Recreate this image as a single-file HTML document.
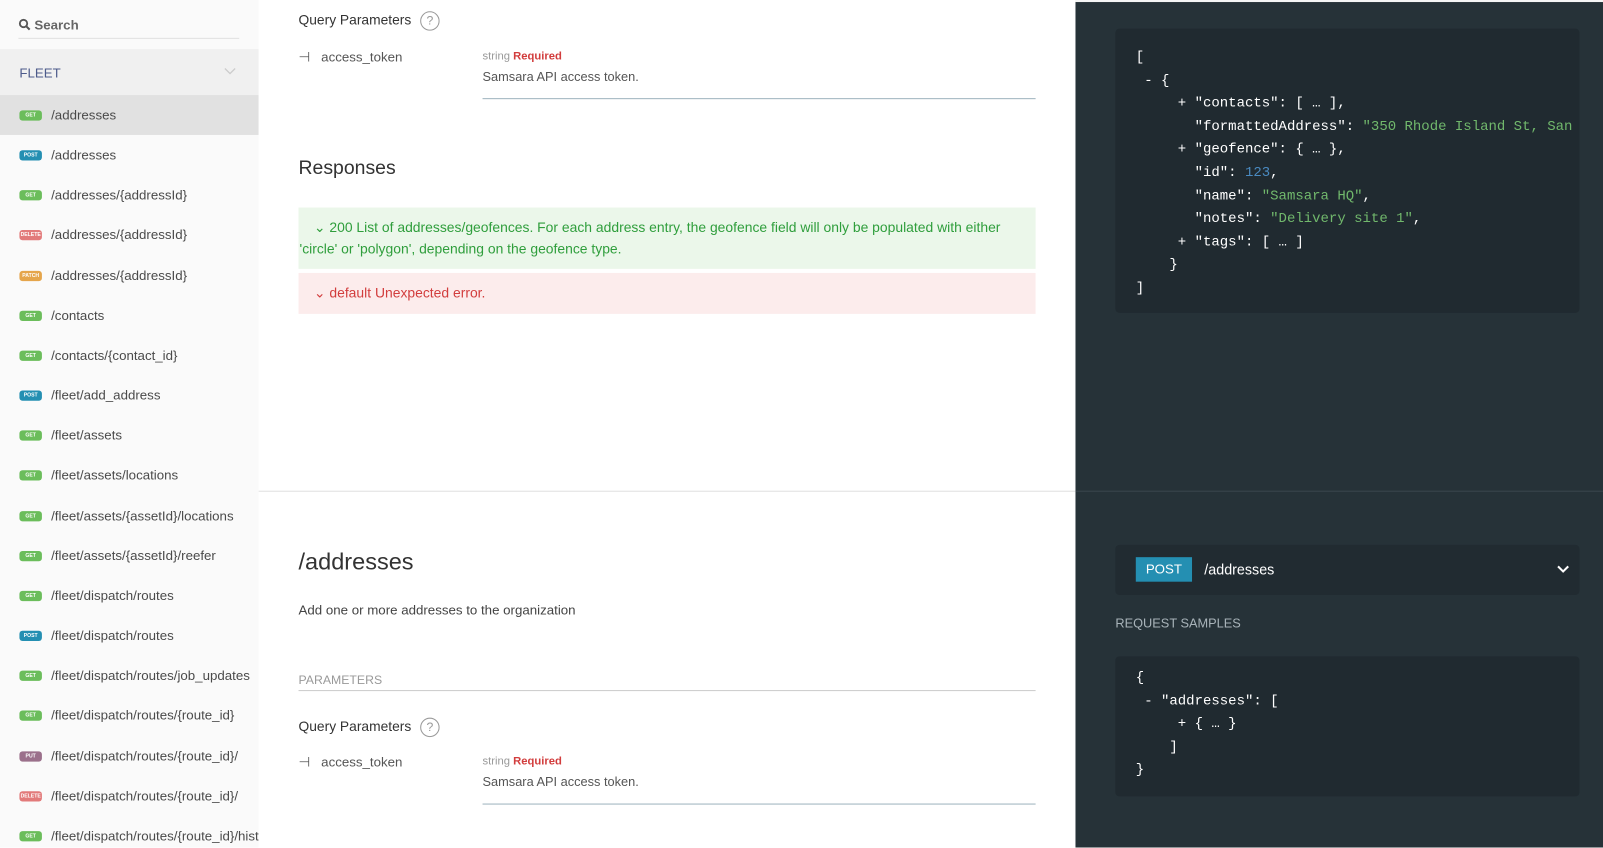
<!DOCTYPE html>
<html><head><meta charset="utf-8"><style>
*{margin:0;padding:0;box-sizing:border-box}
body{width:1603px;height:847px;overflow:hidden;position:relative;font-family:"Liberation Sans",sans-serif;background:#fff;color:#333}
#w{position:absolute;left:0;top:0;width:1568px;height:829px;transform:scale(1.02232);transform-origin:0 0}
.a{position:absolute;white-space:nowrap}
#side{position:absolute;left:0;top:0;width:253px;height:829px;background:#fafafa;overflow:hidden}
.item{position:absolute;left:0;width:253px;height:39px;font-size:13px;color:#4a4a4a}
.item .b{position:absolute;left:19px;top:15px;width:22px;height:10px;border-radius:3px;color:#fff;font-size:5px;font-weight:bold;text-align:center;line-height:10px;overflow:hidden}
.item .t{position:absolute;left:50px;top:12px;white-space:nowrap}
.get{background:#6bbd5b}.post{background:#248fb2}.del{background:#e27a7a}.patch{background:#e5a54b}.put{background:#9b708b}
#right{position:absolute;left:1052px;top:0;width:516px;height:829px;background:#263238}
.code{position:absolute;background:#202a30;border-radius:4px;font-family:"Liberation Mono",monospace;font-size:13.7px;color:#fff;line-height:22.6px;white-space:pre;overflow:hidden}
.s{color:#71b86c}.n{color:#4a8ac0}
</style></head><body><div id="w">
<div id="side">
  <div class="a" style="left:18px;top:17px;font-size:13px;font-weight:bold;color:#666"><svg width="12" height="12" viewBox="0 0 12 12" style="vertical-align:-1px"><circle cx="5" cy="5" r="3.6" fill="none" stroke="#555" stroke-width="1.8"/><path d="M7.6 7.6L11 11" stroke="#555" stroke-width="2"/></svg> Search</div>
  <div class="a" style="left:18px;top:37px;width:216px;height:1px;background:#e0e0e0"></div>
  <div class="a" style="left:0;top:48px;width:253px;height:45px;background:#f0f0f0"></div>
  <div class="a" style="left:19px;top:64px;font-size:13px;color:#4c5a8a">FLEET</div>
  <svg class="a" style="left:219px;top:66px" width="12" height="8" viewBox="0 0 12 8"><path d="M1 1l5 5 5-5" fill="none" stroke="#ccc" stroke-width="1.3"/></svg>
  <div class="a" style="left:0;top:93px;width:253px;height:39px;background:#e1e1e1"></div>
  <div class="item" style="top:93px"><span class="b get">GET</span><span class="t">/addresses</span></div>
  <div class="item" style="top:132px"><span class="b post">POST</span><span class="t">/addresses</span></div>
  <div class="item" style="top:171px"><span class="b get">GET</span><span class="t">/addresses/{addressId}</span></div>
  <div class="item" style="top:210px"><span class="b del">DELETE</span><span class="t">/addresses/{addressId}</span></div>
  <div class="item" style="top:250px"><span class="b patch">PATCH</span><span class="t">/addresses/{addressId}</span></div>
  <div class="item" style="top:289px"><span class="b get">GET</span><span class="t">/contacts</span></div>
  <div class="item" style="top:328px"><span class="b get">GET</span><span class="t">/contacts/{contact_id}</span></div>
  <div class="item" style="top:367px"><span class="b post">POST</span><span class="t">/fleet/add_address</span></div>
  <div class="item" style="top:406px"><span class="b get">GET</span><span class="t">/fleet/assets</span></div>
  <div class="item" style="top:445px"><span class="b get">GET</span><span class="t">/fleet/assets/locations</span></div>
  <div class="item" style="top:485px"><span class="b get">GET</span><span class="t">/fleet/assets/{assetId}/locations</span></div>
  <div class="item" style="top:524px"><span class="b get">GET</span><span class="t">/fleet/assets/{assetId}/reefer</span></div>
  <div class="item" style="top:563px"><span class="b get">GET</span><span class="t">/fleet/dispatch/routes</span></div>
  <div class="item" style="top:602px"><span class="b post">POST</span><span class="t">/fleet/dispatch/routes</span></div>
  <div class="item" style="top:641px"><span class="b get">GET</span><span class="t">/fleet/dispatch/routes/job_updates</span></div>
  <div class="item" style="top:680px"><span class="b get">GET</span><span class="t">/fleet/dispatch/routes/{route_id}</span></div>
  <div class="item" style="top:720px"><span class="b put">PUT</span><span class="t">/fleet/dispatch/routes/{route_id}/</span></div>
  <div class="item" style="top:759px"><span class="b del">DELETE</span><span class="t">/fleet/dispatch/routes/{route_id}/</span></div>
  <div class="item" style="top:798px"><span class="b get">GET</span><span class="t">/fleet/dispatch/routes/{route_id}/history</span></div>
</div>

<div class="a" style="left:292px;top:12px;font-size:13.5px">Query Parameters</div>
<div class="a" style="left:411px;top:11px;width:19px;height:19px;border:1px solid #999;border-radius:50%;font-size:12px;color:#999;text-align:center;line-height:17px">?</div>
<div class="a" style="left:292px;top:48px;font-size:13px;color:#555">⊣&nbsp;&nbsp;&nbsp;access_token</div>
<div class="a" style="left:472px;top:49px;font-size:11px;color:#999">string <b style="color:#d23d3d">Required</b></div>
<div class="a" style="left:472px;top:68px;font-size:12.5px;color:#555">Samsara API access token.</div>
<div class="a" style="left:472px;top:96px;width:541px;height:1px;background:#9fb4be"></div>

<div class="a" style="left:292px;top:154px;font-size:19px;color:#333">Responses</div>
<div class="a" style="left:292px;top:203px;width:721px;height:60px;background:#ebf7ea"></div>
<div class="a" style="left:307px;top:212px;font-size:13.6px;color:#2f9e3c;line-height:21px">⌄ 200 List of addresses/geofences. For each address entry, the geofence field will only be populated with either<br><span style="margin-left:-14px">'circle' or 'polygon', depending on the geofence type.</span></div>
<div class="a" style="left:292px;top:267px;width:721px;height:40px;background:#fcecec"></div>
<div class="a" style="left:307px;top:279px;font-size:13.6px;color:#d23d3d">⌄ default Unexpected error.</div>

<div class="a" style="left:253px;top:480px;width:799px;height:1px;background:#e0e0e0"></div>
<div class="a" style="left:292px;top:536px;font-size:23px;color:#333">/addresses</div>
<div class="a" style="left:292px;top:589px;font-size:13px;color:#444">Add one or more addresses to the organization</div>
<div class="a" style="left:292px;top:658px;font-size:12px;color:#999">PARAMETERS</div>
<div class="a" style="left:292px;top:675px;width:721px;height:1px;background:#ccc"></div>
<div class="a" style="left:292px;top:703px;font-size:13.5px">Query Parameters</div>
<div class="a" style="left:411px;top:702px;width:19px;height:19px;border:1px solid #999;border-radius:50%;font-size:12px;color:#999;text-align:center;line-height:17px">?</div>
<div class="a" style="left:292px;top:738px;font-size:13px;color:#555">⊣&nbsp;&nbsp;&nbsp;access_token</div>
<div class="a" style="left:472px;top:739px;font-size:11px;color:#999">string <b style="color:#d23d3d">Required</b></div>
<div class="a" style="left:472px;top:758px;font-size:12.5px;color:#555">Samsara API access token.</div>
<div class="a" style="left:472px;top:786px;width:541px;height:1px;background:#9fb4be"></div>

<div id="right"></div>
<div class="a" style="left:1052px;top:0;width:516px;height:2px;background:#f5f5f5"></div>
<div class="code" style="left:1091px;top:28px;width:454px;height:278px;padding:18px 0 0 20px">[
 - {
     + "contacts": [ … ],
       "formattedAddress": <span class="s">"350 Rhode Island St, San Francisco"</span>,
     + "geofence": { … },
       "id": <span class="n">123</span>,
       "name": <span class="s">"Samsara HQ"</span>,
       "notes": <span class="s">"Delivery site 1"</span>,
     + "tags": [ … ]
    }
]</div>
<div class="a" style="left:1052px;top:480px;width:516px;height:1px;background:#3a464d"></div>
<div class="a" style="left:1091px;top:533px;width:454px;height:49px;background:#212b31;border-radius:4px"></div>
<div class="a" style="left:1111px;top:545px;width:55px;height:24px;background:#248fb2;color:#fff;font-size:13px;text-align:center;line-height:24px">POST</div>
<div class="a" style="left:1178px;top:549px;font-size:14px;color:#fff">/addresses</div>
<svg class="a" style="left:1523px;top:553px" width="12" height="8" viewBox="0 0 12 8"><path d="M1 1l5 5 5-5" fill="none" stroke="#fff" stroke-width="2"/></svg>
<div class="a" style="left:1091px;top:603px;font-size:12.5px;color:#a8b3b9">REQUEST SAMPLES</div>
<div class="code" style="left:1091px;top:642px;width:454px;height:137px;padding:11px 0 0 20px">{
 - "addresses": [
     + { … }
    ]
}</div>
</div></body></html>
